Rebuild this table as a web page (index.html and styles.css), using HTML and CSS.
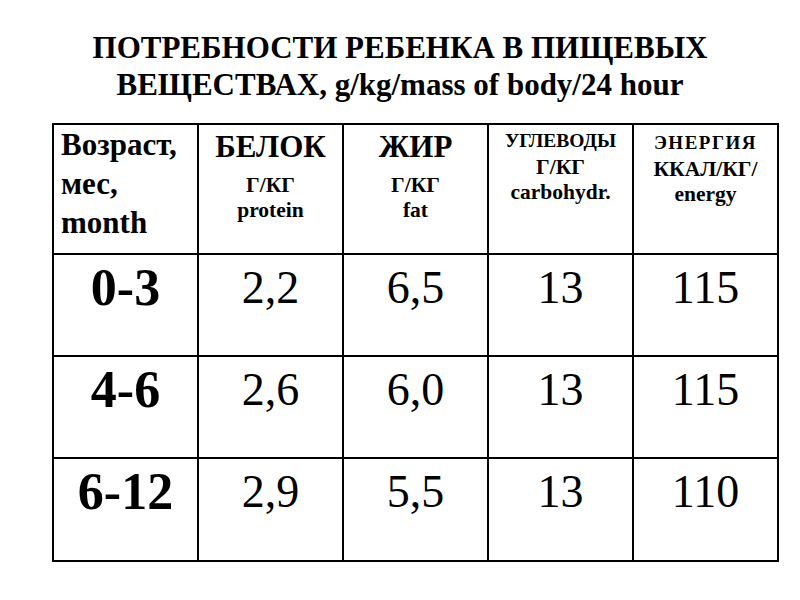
FILE: index.html
```html
<!DOCTYPE html>
<html lang="ru">
<head>
<meta charset="utf-8">
<title>Потребности ребенка в пищевых веществах</title>
<link rel="stylesheet" href="styles.css">
</head>
<body>
<div class="slide">
  <h1 class="title">ПОТРЕБНОСТИ РЕБЕНКА В ПИЩЕВЫХ<br>ВЕЩЕСТВАХ, g/kg/mass of body/24 hour</h1>
  <table class="grid">
    <colgroup>
      <col class="c"><col class="c"><col class="c"><col class="c"><col class="c">
    </colgroup>
    <tr class="head">
      <td class="age-head">Возраст,<br>мес,<br>month</td>
      <td class="col-head">
        <div class="h-main">БЕЛОК</div>
        <div class="h-sub first">Г/КГ</div>
        <div class="h-sub">protein</div>
      </td>
      <td class="col-head">
        <div class="h-main">ЖИР</div>
        <div class="h-sub first">Г/КГ</div>
        <div class="h-sub">fat</div>
      </td>
      <td class="col-head small">
        <div class="h-small">УГЛЕВОДЫ</div>
        <div class="h-sub">Г/КГ</div>
        <div class="h-sub">carbohydr.</div>
      </td>
      <td class="col-head small energy">
        <div class="h-small wide">ЭНЕРГИЯ</div>
        <div class="h-sub">ККАЛ/КГ/</div>
        <div class="h-sub">energy</div>
      </td>
    </tr>
    <tr class="row">
      <td class="age">0-3</td>
      <td class="val">2,2</td>
      <td class="val">6,5</td>
      <td class="val">13</td>
      <td class="val">115</td>
    </tr>
    <tr class="row">
      <td class="age">4-6</td>
      <td class="val">2,6</td>
      <td class="val">6,0</td>
      <td class="val">13</td>
      <td class="val">115</td>
    </tr>
    <tr class="row last">
      <td class="age">6-12</td>
      <td class="val">2,9</td>
      <td class="val">5,5</td>
      <td class="val">13</td>
      <td class="val">110</td>
    </tr>
  </table>
</div>
</body>
</html>
```

FILE: styles.css
```css
html, body {
  margin: 0;
  padding: 0;
  background: #ffffff;
}

.slide {
  width: 800px;
  height: 600px;
  font-family: "Liberation Serif", "Times New Roman", serif;
  color: #000000;
  padding-top: 29px;
  box-sizing: border-box;
}

.title {
  margin: 0;
  font-size: 31px;
  font-weight: bold;
  line-height: 37px;
  text-align: center;
}

.grid {
  margin: 20px 0 0 52px;
  border-collapse: collapse;
  table-layout: fixed;
  width: 727px;
}

.grid .c {
  width: 145px;
}

.grid td {
  border: 2px solid #000000;
  vertical-align: top;
  padding: 0;
  box-sizing: border-box;
}

.head td {
  height: 130px;
}

.age-head {
  font-size: 31px;
  font-weight: bold;
  line-height: 39px;
  padding-left: 7px !important;
}

.col-head {
  text-align: center;
  font-weight: bold;
  padding-top: 4px !important;
}

.col-head.small {
  padding-top: 2px !important;
}

.col-head.energy {
  padding-top: 4px !important;
}

.h-main {
  font-size: 31px;
  line-height: 36px;
}

.h-small {
  font-size: 19.5px;
  line-height: 28px;
}

.h-small.wide {
  font-size: 19px;
  letter-spacing: 1.5px;
}

.h-sub {
  font-size: 21.5px;
  line-height: 25px;
}

.h-sub.first {
  margin-top: 8px;
}

.row td {
  height: 102px;
  text-align: center;
  padding-top: 4px;
}

.row.last td {
  height: 103px;
}

.age {
  font-size: 52px;
  font-weight: bold;
  line-height: 58px;
}

.row .val {
  font-size: 46px;
  line-height: 53px;
  padding-top: 6px;
}
```
